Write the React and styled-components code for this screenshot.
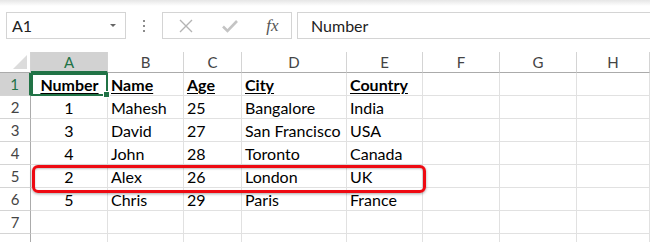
import React from 'react';
import styled, { createGlobalStyle } from 'styled-components';

const GlobalStyle = createGlobalStyle`
  html, body {
    margin: 0;
    padding: 0;
    background: #ffffff;
  }
  body {
    font-family: Lato, "Liberation Sans", sans-serif;
  }
`;

const Window = styled.div`
  position: relative;
  width: 650px;
  height: 242px;
  overflow: hidden;
  background: #ffffff;
`;

const Toolbar = styled.div`
  height: 52px;
  box-sizing: border-box;
  padding-top: 12px;
  padding-left: 6px;
  display: flex;
  align-items: flex-start;
  background: linear-gradient(to bottom, #e6e6e6 0px, #ffffff 6px, #ffffff 100%);
`;

const Box = styled.div`
  height: 27px;
  box-sizing: border-box;
  border: 1px solid #d4d4d4;
  background: #ffffff;
  display: flex;
  align-items: center;
`;

const NameBox = styled(Box)`
  width: 120px;
  padding: 0 9px 0 5px;
  justify-content: space-between;
  font-size: 16px;
  color: #222;
`;

const Caret = styled.span`
  width: 0;
  height: 0;
  border-left: 3px solid transparent;
  border-right: 3px solid transparent;
  border-top: 3px solid #666;
`;

const Dots = styled.div`
  width: 36px;
  height: 27px;
  display: flex;
  flex-direction: column;
  align-items: center;
  justify-content: center;
  gap: 3px;

  & span {
    width: 2px;
    height: 2px;
    background: #8c8c8c;
  }
`;

const ButtonsBox = styled(Box)`
  width: 130px;
  padding: 0 0 0 14px;
`;

const IconSlot = styled.div`
  width: ${(p) => p.$w}px;
  display: flex;
  align-items: center;
  justify-content: center;
`;

const Fx = styled.span`
  font-family: "Liberation Serif", "DejaVu Serif", serif;
  font-style: italic;
  font-size: 17px;
  color: #555;
`;

const FormulaBox = styled(Box)`
  flex: 1;
  margin-left: 5px;
  padding-left: 13px;
  font-size: 16px;
  color: #222;
  border-right: none;
`;

const Grid = styled.div`
  display: grid;
  grid-template-columns: 31px 77px 76px 58px 105px 76px 77px 77px 1fr;
  grid-template-rows: 21px;
  grid-auto-rows: 23px;
`;

const Corner = styled.div`
  position: relative;
  background: #ffffff;
  border-right: 1px solid #d4d4d4;
  border-bottom: 1px solid #ababab;
  box-sizing: border-box;
  overflow: hidden;

  &::after {
    content: '';
    position: absolute;
    right: 3px;
    bottom: 3px;
    width: 0;
    height: 0;
    border-left: 14px solid transparent;
    border-bottom: 14px solid #dcdcdc;
  }
`;

const ColHeader = styled.div`
  box-sizing: border-box;
  display: flex;
  align-items: center;
  justify-content: center;
  font-size: 15px;
  color: ${(p) => (p.$active ? '#217346' : '#444')};
  background: ${(p) => (p.$active ? '#d2d2d2' : '#ffffff')};
  border-right: 1px solid #d4d4d4;
  border-bottom: ${(p) => (p.$active ? '2px solid #217346' : '1px solid #ababab')};
`;

const RowHeader = styled.div`
  box-sizing: border-box;
  display: flex;
  align-items: center;
  justify-content: center;
  font-size: 15px;
  color: ${(p) => (p.$active ? '#217346' : '#444')};
  background: ${(p) => (p.$active ? '#d2d2d2' : '#ffffff')};
  border-right: ${(p) => (p.$active ? '2px solid #217346' : '1px solid #ababab')};
  border-bottom: 1px solid #d4d4d4;
`;

const Cell = styled.div`
  position: relative;
  box-sizing: border-box;
  display: flex;
  align-items: center;
  justify-content: ${(p) => (p.$center ? 'center' : 'flex-start')};
  padding: 0 3px;
  font-size: 16px;
  color: #000;
  white-space: nowrap;
  border-right: 1px solid #e1e1e1;
  border-bottom: 1px solid #e1e1e1;
  font-weight: ${(p) => (p.$head ? 700 : 400)};
  text-decoration: ${(p) => (p.$head ? 'underline' : 'none')};
  text-underline-offset: 2px;

  ${(p) =>
    p.$selected &&
    `
    border: 2px solid #217346;
    &::after {
      content: '';
      position: absolute;
      right: -4px;
      bottom: -4px;
      width: 5px;
      height: 5px;
      background: #217346;
      border: 1px solid #fff;
      z-index: 2;
    }
  `}
`;

const Highlight = styled.div`
  position: absolute;
  left: 32px;
  top: 165px;
  width: 394px;
  height: 28px;
  box-sizing: border-box;
  border: 3px solid #ee0a12;
  border-radius: 6px;
  box-shadow: 0 1px 3px rgba(0, 0, 0, 0.35), inset 0 1px 2px rgba(0, 0, 0, 0.25);
  pointer-events: none;
`;

const columns = ['A', 'B', 'C', 'D', 'E', 'F', 'G', 'H'];

const rows = [
  ['Number', 'Name', 'Age', 'City', 'Country'],
  ['1', 'Mahesh', '25', 'Bangalore', 'India'],
  ['3', 'David', '27', 'San Francisco', 'USA'],
  ['4', 'John', '28', 'Toronto', 'Canada'],
  ['2', 'Alex', '26', 'London', 'UK'],
  ['5', 'Chris', '29', 'Paris', 'France'],
  [],
  [],
];

const App = () => {
  return (
    <Window>
      <GlobalStyle />
      <Toolbar>
        <NameBox>
          <span>A1</span>
          <Caret />
        </NameBox>
        <Dots>
          <span />
          <span />
          <span />
        </Dots>
        <ButtonsBox>
          <IconSlot $w={18}>
            <svg width="16" height="16" viewBox="0 0 16 16">
              <path d="M2 2 L14 14 M14 2 L2 14" stroke="#b4b4b4" strokeWidth="1.4" fill="none" />
            </svg>
          </IconSlot>
          <IconSlot $w={70}>
            <svg width="18" height="16" viewBox="0 0 18 16">
              <path d="M2 8.5 L6.5 13 L16 3" stroke="#c4c4c4" strokeWidth="2.6" fill="none" />
            </svg>
          </IconSlot>
          <IconSlot $w={15}>
            <Fx>fx</Fx>
          </IconSlot>
        </ButtonsBox>
        <FormulaBox>Number</FormulaBox>
      </Toolbar>
      <Grid>
        <Corner />
        {columns.map((c) => (
          <ColHeader key={c} $active={c === 'A'}>
            {c}
          </ColHeader>
        ))}
        {rows.map((r, i) => (
          <React.Fragment key={i}>
            <RowHeader $active={i === 0}>{i < 7 ? i + 1 : ''}</RowHeader>
            {columns.map((c, j) => (
              <Cell
                key={c}
                $head={i === 0 && !!r[j]}
                $center={j === 0}
                $selected={i === 0 && j === 0}
              >
                {r[j] || ''}
              </Cell>
            ))}
          </React.Fragment>
        ))}
      </Grid>
      <Highlight />
    </Window>
  );
};

export default App;
